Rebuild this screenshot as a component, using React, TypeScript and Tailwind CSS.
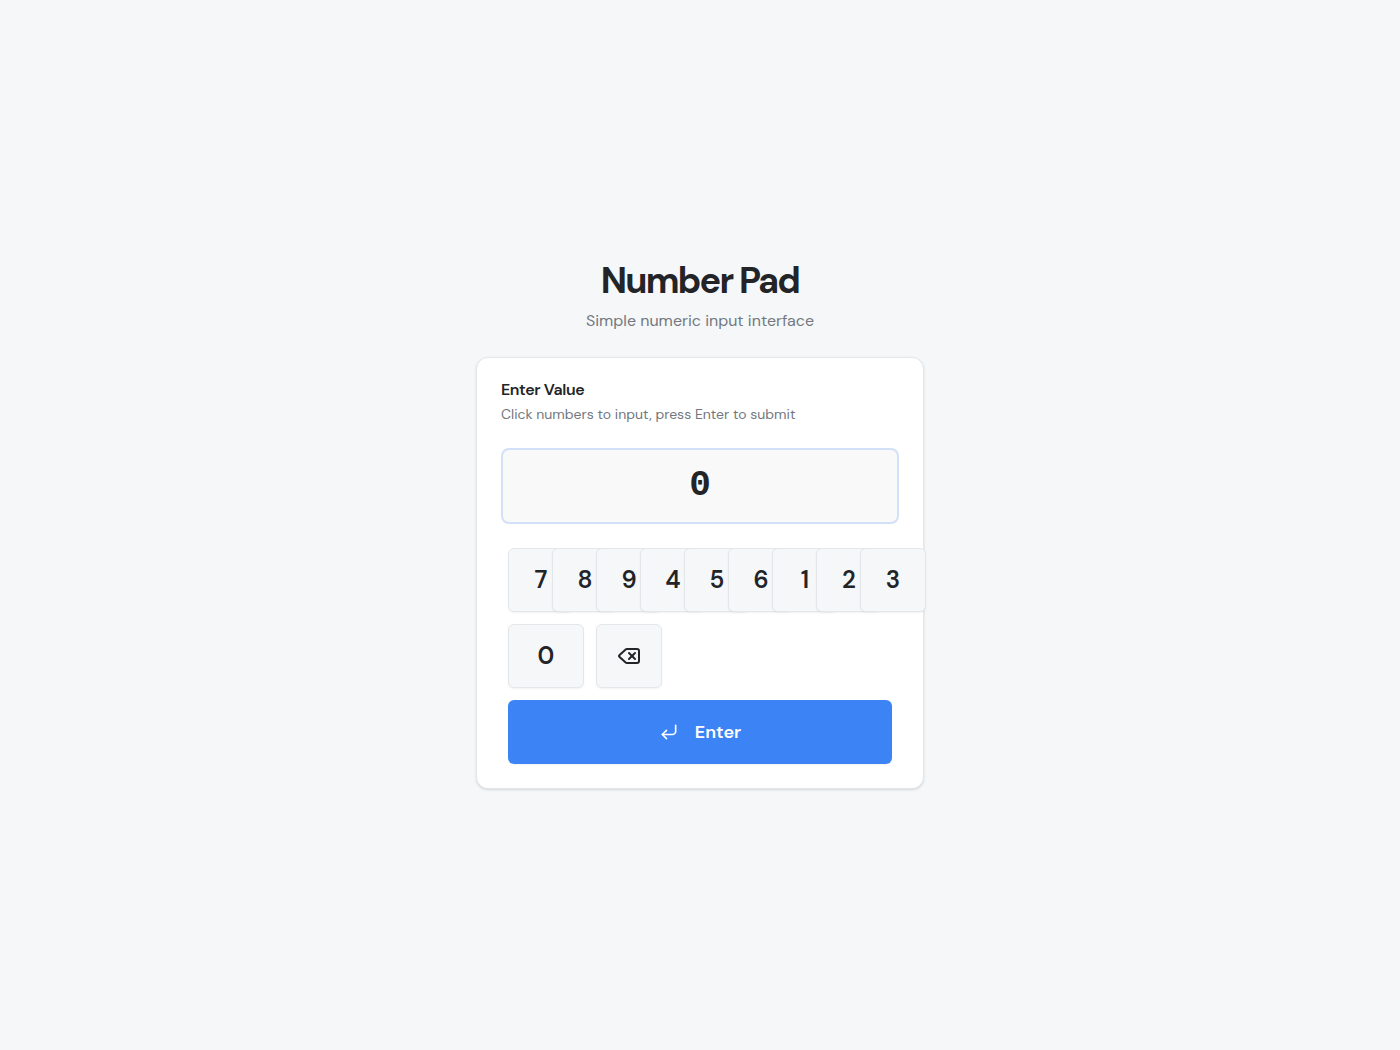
import { useState } from 'react'
import { CornerDownLeft, Delete } from 'lucide-react'

const digits = ['7', '8', '9', '4', '5', '6', '1', '2', '3']

const keyClass =
  'flex h-16 min-w-[66px] items-center justify-center rounded-md border border-[#e4e7ea] bg-[#f5f7f9] text-2xl font-semibold text-[#222427] shadow-xs hover:bg-gray-100'

export default function App() {
  const [value, setValue] = useState('')

  const append = (digit: string) => setValue((prev) => prev + digit)

  return (
    <main className="flex min-h-screen items-center justify-center bg-[#f5f7f9] p-4 font-['DM_Sans','Inter',sans-serif] text-[#222427]">
      <div className="w-full max-w-md space-y-6">
        <header className="space-y-2 text-center">
          <h1 className="text-4xl font-bold tracking-tighter">Number Pad</h1>
          <p className="text-base text-[#727780]">Simple numeric input interface</p>
        </header>

        <section className="rounded-xl border border-[#e4e7ea] bg-white p-6 shadow-sm">
          <div className="space-y-1.5">
            <h2 id="value-label" className="text-base leading-none font-semibold tracking-tight">
              Enter Value
            </h2>
            <p className="text-sm text-[#727780]">Click numbers to input, press Enter to submit</p>
          </div>

          <output
            aria-labelledby="value-label"
            className="mt-6 block rounded-lg border-2 border-[#d2e0f8] bg-[#f9f9f9] p-4 text-center font-['Liberation_Mono',monospace] text-4xl font-bold"
          >
            {value || '0'}
          </output>

          <div className="mx-auto mt-6 grid max-w-sm grid-cols-9 gap-3">
            {digits.map((digit) => (
              <button key={digit} type="button" className={keyClass} onClick={() => append(digit)}>
                {digit}
              </button>
            ))}
            <button type="button" className={`${keyClass} col-span-2`} onClick={() => append('0')}>
              0
            </button>
            <button
              type="button"
              aria-label="Delete"
              className={keyClass}
              onClick={() => setValue((prev) => prev.slice(0, -1))}
            >
              <Delete className="size-6 shrink-0" />
            </button>
            <button
              type="button"
              className="col-span-9 flex h-16 items-center justify-center gap-4 rounded-md bg-[#3c83f6] text-lg font-semibold text-white shadow-xs hover:bg-blue-600"
              onClick={() => setValue('')}
            >
              <CornerDownLeft className="size-5" />
              Enter
            </button>
          </div>
        </section>
      </div>
    </main>
  )
}
